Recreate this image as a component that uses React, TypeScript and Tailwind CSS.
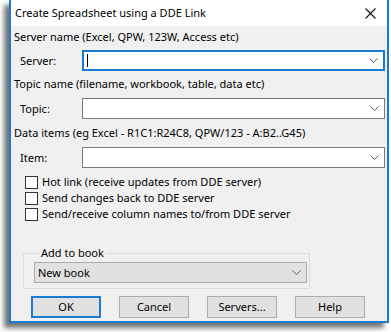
import React from "react";

const Chevron = () => (
  <svg width="9" height="5" viewBox="0 0 9 5" className="shrink-0">
    <polyline points="0.5,0.5 4.5,4.5 8.5,0.5" fill="none" stroke="#606060" strokeWidth="1" />
  </svg>
);

const Combo = ({ focused }: { focused?: boolean }) => (
  <div
    className={`flex-1 h-[21px] bg-white flex items-center justify-between pl-[3px] pr-[5px] ${
      focused ? "border-2 border-[#1a7ad4]" : "border border-[#7a7a7a]"
    }`}
  >
    {focused ? <div className="w-px h-[13px] bg-black" /> : <div />}
    <Chevron />
  </div>
);

const Check = ({ label }: { label: string }) => (
  <div className="flex items-center h-[16px] gap-[4px]">
    <div className="w-[13px] h-[13px] bg-white border border-[#333]" />
    <span>{label}</span>
  </div>
);

const Btn = ({ label, primary }: { label: string; primary?: boolean }) => (
  <button
    type="button"
    className={`w-[70px] h-[22px] bg-[#e1e1e1] text-black ${
      primary ? "border-2 border-[#1a7ad4]" : "border border-[#adadad]"
    }`}
  >
    {label}
  </button>
);

export default function App() {
  return (
    <div
      className="w-[391px] h-[332px] bg-white relative text-[11px] text-black"
      style={{ fontFamily: '"Noto Sans", "Liberation Sans", sans-serif' }}
    >
      <div className="ml-[9px] w-[380px] h-[323px] bg-[#f0f0f0] border-x-2 border-b-2 border-[#1a7ad4] shadow-[-5px_5px_5px_rgba(0,0,0,0.55)] flex flex-col">
        <div className="h-[26px] bg-white flex items-center justify-between pl-[4px] pr-[11px] shrink-0">
          <span className="text-[11px]">Create Spreadsheet using a DDE Link</span>
          <svg width="11" height="11" viewBox="0 0 11 11">
            <path d="M0.5 0.5 L10.5 10.5 M10.5 0.5 L0.5 10.5" stroke="#111" strokeWidth="1.1" />
          </svg>
        </div>

        <div className="flex flex-col pl-[3px] pr-[2px] leading-[14px]">
          <div className="mt-[4px] h-[14px]">Server name (Excel, QPW, 123W, Access etc)</div>
          <div className="mt-[6px] flex items-center">
            <span className="w-[68px] pl-[6px]">Server:</span>
            <Combo focused />
          </div>

          <div className="mt-[6px] h-[14px]">Topic name (filename, workbook, table, data etc)</div>
          <div className="mt-[7px] flex items-center">
            <span className="w-[68px] pl-[6px]">Topic:</span>
            <Combo />
          </div>

          <div className="mt-[7px] h-[14px]">Data items (eg Excel - R1C1:R24C8, QPW/123 - A:B2..G45)</div>
          <div className="mt-[7px] flex items-center">
            <span className="w-[68px] pl-[6px]">Item:</span>
            <Combo />
          </div>

          <div className="mt-[6px] pl-[11px] flex flex-col">
            <Check label="Hot link (receive updates from DDE server)" />
            <Check label="Send changes back to DDE server" />
            <Check label="Send/receive column names to/from DDE server" />
          </div>

          <fieldset className="mt-[24px] ml-[9px] w-[287px] border border-[#dcdcdc] pl-[10px] pr-[2px] pb-[5px] pt-[2px]">
            <legend className="px-[2px] ml-[5px] leading-[14px]">Add to book</legend>
            <div className="h-[21px] bg-[#e1e1e1] border border-[#adadad] flex items-center justify-between pl-[3px] pr-[5px]">
              <span>New book</span>
              <Chevron />
            </div>
          </fieldset>

          <div className="mt-[7px] ml-[17px] flex gap-[18px]">
            <Btn label="OK" primary />
            <Btn label="Cancel" />
            <Btn label="Servers..." />
            <Btn label="Help" />
          </div>
        </div>
      </div>
    </div>
  );
}
